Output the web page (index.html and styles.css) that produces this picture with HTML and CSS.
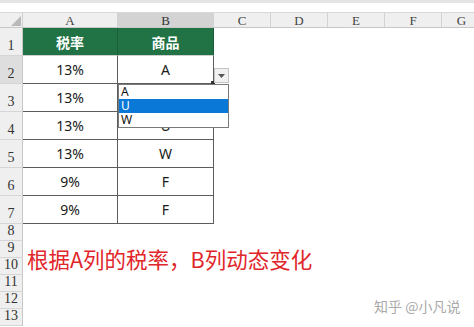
FILE: index.html
```html
<!DOCTYPE html>
<html lang="zh-CN">
<head>
<meta charset="utf-8">
<title>Excel</title>
<link rel="stylesheet" href="styles.css">
</head>
<body>
<div class="sheet">
  <div class="topbar"></div>
  <div class="colhead">
    <div class="corner"><svg width="23" height="15" viewBox="0 0 23 15"><polygon points="21,3 21,13 11,13" fill="#b9b9b9"/></svg></div>
    <div class="ch w-a">A</div>
    <div class="ch w-b sel">B</div>
    <div class="ch w-c">C</div>
    <div class="ch w-c">D</div>
    <div class="ch w-c">E</div>
    <div class="ch w-c">F</div>
    <div class="ch w-g">G</div>
  </div>

  <div class="row tall">
    <div class="rh">1</div>
    <div class="cell head w-a">税率</div>
    <div class="cell head w-b">商品</div>
  </div>
  <div class="row tall">
    <div class="rh sel">2</div>
    <div class="cell w-a">13%</div>
    <div class="cell w-b">A</div>
  </div>
  <div class="row tall">
    <div class="rh">3</div>
    <div class="cell w-a">13%</div>
    <div class="cell w-b">A</div>
  </div>
  <div class="row tall">
    <div class="rh">4</div>
    <div class="cell w-a">13%</div>
    <div class="cell w-b">U</div>
  </div>
  <div class="row tall">
    <div class="rh">5</div>
    <div class="cell w-a">13%</div>
    <div class="cell w-b">W</div>
  </div>
  <div class="row tall">
    <div class="rh">6</div>
    <div class="cell w-a">9%</div>
    <div class="cell w-b">F</div>
  </div>
  <div class="row tall">
    <div class="rh">7</div>
    <div class="cell w-a">9%</div>
    <div class="cell w-b">F</div>
  </div>
  <div class="row short">
    <div class="rh">8</div>
  </div>
  <div class="group">
    <div class="rhcol">
      <div class="rh short">9</div>
      <div class="rh short">10</div>
    </div>
    <div class="note">根据A列的税率，B列动态变化</div>
  </div>
  <div class="row short"><div class="rh">11</div></div>
  <div class="row short"><div class="rh">12</div></div>
  <div class="row short"><div class="rh">13</div></div>

  <div class="fill-handle"></div>
  <div class="dd-btn"><svg width="7" height="4" viewBox="0 0 7 4"><polygon points="0,0 7,0 3.5,4" fill="#555"/></svg></div>
  <ul class="dd-list">
    <li>A</li>
    <li class="hl">U</li>
    <li>W</li>
  </ul>
  <div class="mark">知乎 @小凡说</div>
</div>
</body>
</html>
```
FILE: styles.css
```css
* { box-sizing: border-box; }
html, body { margin: 0; padding: 0; background: #fff; }
body { width: 474px; height: 327px; overflow: hidden; }

.sheet {
  position: relative;
  width: 474px;
  height: 327px;
  overflow: hidden;
  font-family: "Noto Sans", "Noto Sans CJK SC", sans-serif;
}

.topbar {
  height: 13px;
  border-top: 3px solid #e4e4e4;
  background: #fff;
  border-bottom: 1px solid #d8d8d8;
}

.colhead {
  display: flex;
  height: 15px;
  background: #efefef;
  border-bottom: 1px solid #c8c8c8;
}
.corner { width: 23px; flex: none; border-right: 1px solid #d0d0d0; }
.corner svg { display: block; }
.ch {
  flex: none;
  display: flex;
  align-items: center;
  justify-content: center;
  font-family: "Liberation Serif", serif;
  font-size: 13px;
  color: #444;
  border-right: 1px solid #d3d3d3;
  line-height: 1;
}
.ch.sel { background: #d3d3d3; color: #333; }

.w-a { width: 95px; }
.w-b { width: 96px; }
.w-c { width: 57px; }
.w-g { width: 40px; }

.row { display: flex; }
.tall { height: 28px; }
.short { height: 17px; }

.rh {
  width: 23px;
  flex: none;
  background: #efefef;
  border-right: 1px solid #c8c8c8;
  border-bottom: 1px solid #d6d6d6;
  display: flex;
  align-items: flex-end;
  justify-content: center;
  font-family: "Liberation Serif", serif;
  font-size: 14px;
  line-height: 1;
  padding-bottom: 2px;
  color: #333;
}
.rh.sel { background: #dedede; }
.rh.short { height: 17px; }

.cell {
  flex: none;
  display: flex;
  align-items: center;
  justify-content: center;
  font-size: 14px;
  color: #1a1a1a;
  border-right: 1px solid #5c5c5c;
  border-bottom: 1px solid #5c5c5c;
}
.cell.head {
  background: #217346;
  color: #fff;
  font-family: "Noto Sans CJK SC", sans-serif;
  font-weight: 700;
  font-size: 14px;
  border-right-color: #1b5e39;
  border-bottom-color: #cfcfcf;
}

.group { display: flex; height: 34px; }
.rhcol { width: 23px; flex: none; display: flex; flex-direction: column; }
.note {
  padding-left: 4px;
  display: flex;
  align-items: center;
  font-family: "Noto Sans CJK SC", sans-serif;
  font-size: 21.5px;
  color: #e1262b;
  white-space: nowrap;
  line-height: 1;
  padding-top: 1px;
}

.fill-handle {
  position: absolute;
  left: 211px;
  top: 81px;
  width: 4px;
  height: 4px;
  background: #333;
}
.dd-btn {
  position: absolute;
  left: 214px;
  top: 68px;
  width: 15px;
  height: 15px;
  background: #f1f1f1;
  border: 1px solid #c4c4c4;
  display: flex;
  align-items: center;
  justify-content: center;
}
.dd-btn svg { display: block; }

.dd-list {
  position: absolute;
  left: 118px;
  top: 84px;
  width: 111px;
  height: 44px;
  margin: 0;
  padding: 0;
  list-style: none;
  background: #fff;
  border: 1px solid #7a7a7a;
}
.dd-list li {
  height: 14px;
  line-height: 14px;
  padding-left: 2px;
  font-size: 12px;
  color: #111;
}
.dd-list li.hl { background: #0a78d7; color: #fff; }

.mark {
  position: absolute;
  left: 374px;
  top: 299px;
  font-family: "Noto Sans CJK SC", sans-serif;
  font-size: 14px;
  color: #a9a9a9;
  line-height: 1;
  white-space: nowrap;
}
```
